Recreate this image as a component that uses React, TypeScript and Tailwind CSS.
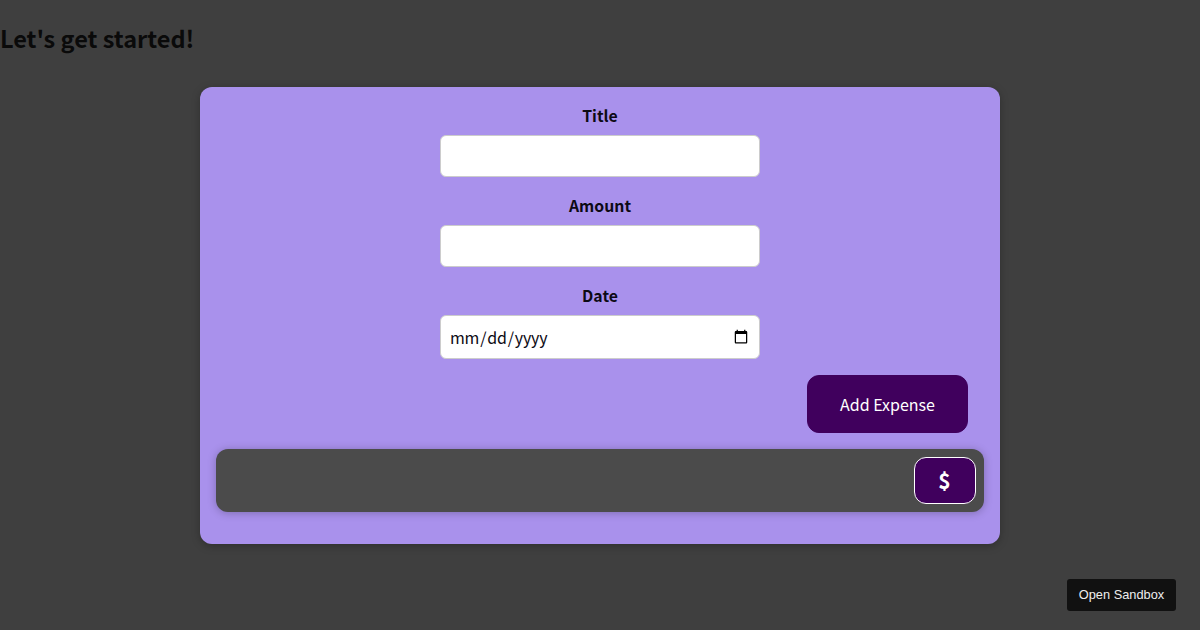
export default function App() {
  const fields = [
    { name: "Title", type: "text" },
    { name: "Amount", type: "number" },
  ];

  return (
    <div className="relative h-[630px] overflow-hidden bg-[#3f3f3f] font-['Noto_Sans_CJK_SC','Noto_Sans',sans-serif]">
      <h1 className="pt-[20px] pb-[31px] text-[23.5px] leading-[36px] font-bold text-[#0a0a0a]">
        Let's get started!
      </h1>

      <div className="mx-auto flex h-[457px] w-[800px] flex-col rounded-xl bg-[#a991ec] px-4 pt-4 shadow-[0_2px_8px_rgba(0,0,0,0.26)]">
        {/* Form fields */}
        <div className="flex flex-col items-center">
          {fields.map((field) => (
            <div key={field.name} className="mb-4 flex h-[74px] w-[320px] flex-col items-center">
              <label className="mb-[7px] text-[15.8px] leading-[25px] font-bold text-[#0d0a14]">
                {field.name}
              </label>
              <input
                type={field.type}
                className="h-[42px] w-full rounded-md border border-[#cccccc] bg-white px-2 text-[16px]"
              />
            </div>
          ))}
          <div className="flex h-[76px] w-[320px] flex-col items-center">
            <label className="mb-[7px] text-[15.8px] leading-[25px] font-bold text-[#0d0a14]">
              Date
            </label>
            <input
              type="date"
              className="h-[44px] w-full rounded-md border border-[#cccccc] bg-white px-2 text-[16px] tracking-[-0.2px] text-[#0d0a14]"
            />
          </div>
        </div>

        {/* Submit */}
        <div className="mt-4 flex justify-end pr-4">
          <button className="h-[58px] w-[161px] rounded-xl border border-[#40005d] bg-[#40005d] text-[16px] text-white">
            Add Expense
          </button>
        </div>

        {/* Filter bar */}
        <div className="mt-4 flex h-[63px] justify-end rounded-xl bg-[#4b4b4b] pt-2 pr-2 shadow-[0_1px_8px_rgba(0,0,0,0.25)]">
          <button className="h-[47px] w-[62px] rounded-xl border border-white bg-[#40005d] pr-px text-[21px] font-bold text-white">
            $
          </button>
        </div>
      </div>

      <a className="absolute top-[579px] left-[1067px] flex h-[32px] w-[109px] items-center justify-center rounded-[3px] bg-[#111111] font-['Liberation_Sans',sans-serif] text-[12.8px] text-[#eeeeee]">
        Open Sandbox
      </a>
    </div>
  );
}
